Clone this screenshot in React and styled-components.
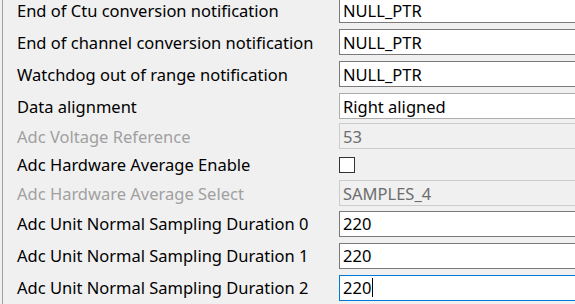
import React from "react";
import styled, { createGlobalStyle } from "styled-components";

const GlobalStyle = createGlobalStyle`
  html, body {
    margin: 0;
    padding: 0;
    background: #f0f0f0;
    overflow: hidden;
  }
`;

const rows = [
  { label: "End of Ctu conversion notification", value: "NULL_PTR" },
  { label: "End of channel conversion notification", value: "NULL_PTR" },
  { label: "Watchdog out of range notification", value: "NULL_PTR" },
  { label: "Data alignment", value: "Right aligned", combo: true },
  { label: "Adc Voltage Reference", value: "53", disabled: true },
  { label: "Adc Hardware Average Enable", checkbox: true },
  { label: "Adc Hardware Average Select", value: "SAMPLES_4", disabled: true },
  { label: "Adc Unit Normal Sampling Duration 0", value: "220" },
  { label: "Adc Unit Normal Sampling Duration 1", value: "220" },
  { label: "Adc Unit Normal Sampling Duration 2", value: "220", focused: true },
];

const borderColor = (p) => {
  if (p.$focused) return "#0078d7";
  if (p.$disabled) return "#cccccc";
  if (p.$combo) return "#adadad";
  return "#7a7a7a";
};

const App = () => {
  return (
    <Page>
      <GlobalStyle />
      <Panel>
        {rows.map((row) => (
          <Row key={row.label} $compact={row.disabled || row.checkbox}>
            <Label $disabled={row.disabled}>{row.label}</Label>
            {row.checkbox ? (
              <Checkbox />
            ) : (
              <Field
                $disabled={row.disabled}
                $focused={row.focused}
                $combo={row.combo}
              >
                {row.value}
                {row.focused && <Caret />}
              </Field>
            )}
          </Row>
        ))}
      </Panel>
    </Page>
  );
};

const Page = styled.div`
  width: 575px;
  height: 304px;
  overflow: hidden;
  background: #f0f0f0;
  font-family: "Noto Sans", "Open Sans", sans-serif;
  font-size: 16.5px;
  color: #000;
`;

const Panel = styled.div`
  margin-left: 2px;
  margin-top: -6px;
  border-left: 1px solid #a0a0a0;
  display: flex;
  flex-direction: column;
`;

const Row = styled.div`
  display: grid;
  grid-template-columns: 336px 260px;
  align-items: center;
  height: ${(p) => (p.$compact ? "28.5px" : "32px")};
`;

const Label = styled.div`
  padding-left: 14px;
  white-space: nowrap;
  color: ${(p) => (p.$disabled ? "#a0a0a0" : "#000")};
`;

const Field = styled.div`
  box-sizing: border-box;
  height: 26px;
  display: flex;
  align-items: center;
  padding-left: 3px;
  white-space: nowrap;
  background: ${(p) => (p.$disabled ? "#f0f0f0" : "#fff")};
  color: ${(p) => (p.$disabled ? "#6d6d6d" : "#000")};
  border: 1px solid ${borderColor};
`;

const Caret = styled.span`
  display: inline-block;
  width: 1px;
  height: 19px;
  background: #000;
  margin-left: 1px;
`;

const Checkbox = styled.div`
  box-sizing: border-box;
  width: 16px;
  height: 16px;
  background: #fff;
  border: 1px solid #333;
`;

export default App;
